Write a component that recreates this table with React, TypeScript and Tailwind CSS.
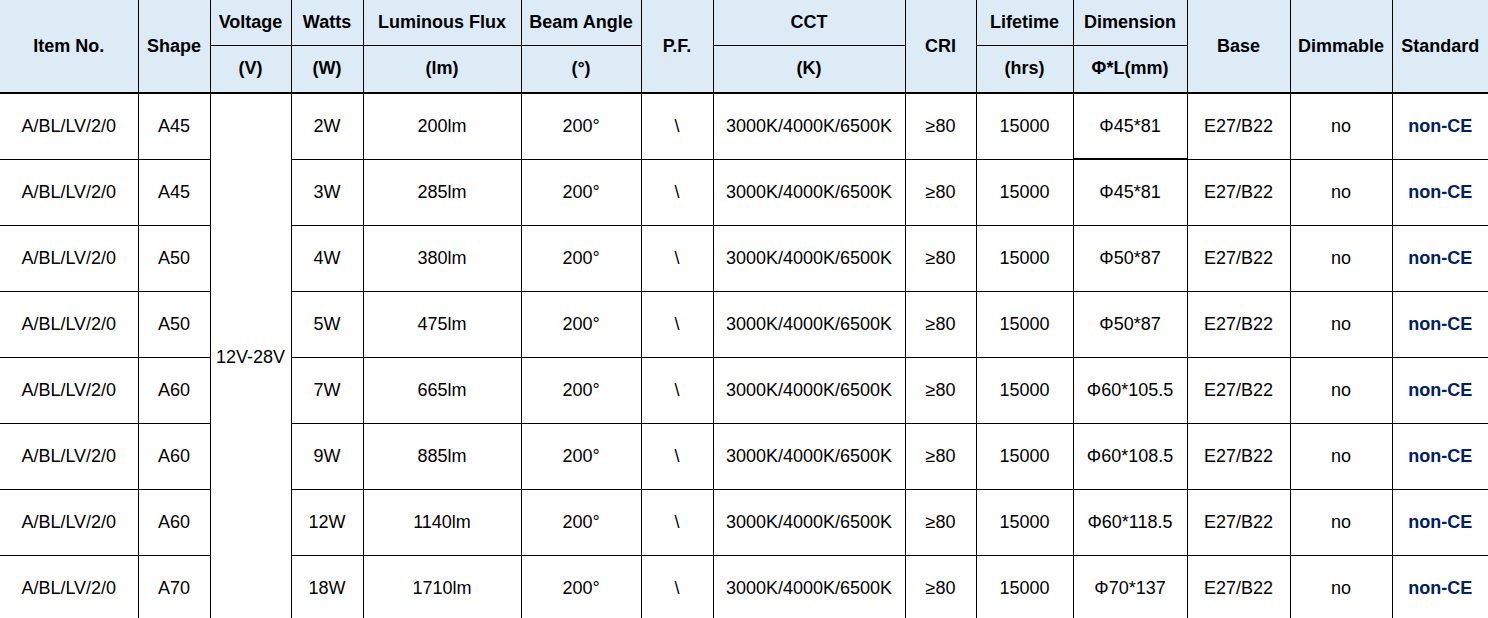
const rows = [
  { shape: "A45", watts: "2W", flux: "200lm", dim: "Φ45*81" },
  { shape: "A45", watts: "3W", flux: "285lm", dim: "Φ45*81" },
  { shape: "A50", watts: "4W", flux: "380lm", dim: "Φ50*87" },
  { shape: "A50", watts: "5W", flux: "475lm", dim: "Φ50*87" },
  { shape: "A60", watts: "7W", flux: "665lm", dim: "Φ60*105.5" },
  { shape: "A60", watts: "9W", flux: "885lm", dim: "Φ60*108.5" },
  { shape: "A60", watts: "12W", flux: "1140lm", dim: "Φ60*118.5" },
  { shape: "A70", watts: "18W", flux: "1710lm", dim: "Φ70*137" },
];

const widths = [138, 72, 81, 72, 158, 120, 72, 192, 71, 97, 114, 103, 102, 96];

const cell = "border-r border-b border-black text-center align-middle p-0";
const head = "border-r border-black text-center align-middle p-0 font-bold";

export default function App() {
  return (
    <div className="w-[1488px] h-[618px] overflow-hidden bg-white">
      <table
        className="table-fixed border-collapse text-[18px] text-black"
        style={{ width: 1488, fontFamily: '"Liberation Sans", Arial, sans-serif' }}
      >
        <colgroup>
          {widths.map((w, i) => (
            <col key={i} style={{ width: w }} />
          ))}
        </colgroup>
        <thead className="bg-[#ddebf7]">
          <tr className="h-[45px]">
            <th rowSpan={2} className={`${head} border-b-2`}>Item No.</th>
            <th rowSpan={2} className={`${head} border-b-2`}>Shape</th>
            <th className={`${head} border-b`}>Voltage</th>
            <th className={`${head} border-b`}>Watts</th>
            <th className={`${head} border-b`}>Luminous Flux</th>
            <th className={`${head} border-b`}>Beam Angle</th>
            <th rowSpan={2} className={`${head} border-b-2`}>P.F.</th>
            <th className={`${head} border-b`}>CCT</th>
            <th rowSpan={2} className={`${head} border-b-2`}>CRI</th>
            <th className={`${head} border-b`}>Lifetime</th>
            <th className={`${head} border-b`}>Dimension</th>
            <th rowSpan={2} className={`${head} border-b-2`}>Base</th>
            <th rowSpan={2} className={`${head} border-b-2`}>Dimmable</th>
            <th rowSpan={2} className="border-b-2 border-black text-center align-middle p-0 font-bold">
              Standard
            </th>
          </tr>
          <tr className="h-[48px]">
            <th className={`${head} border-b-2`}>(V)</th>
            <th className={`${head} border-b-2`}>(W)</th>
            <th className={`${head} border-b-2`}>(lm)</th>
            <th className={`${head} border-b-2`}>(°)</th>
            <th className={`${head} border-b-2`}>(K)</th>
            <th className={`${head} border-b-2`}>(hrs)</th>
            <th className={`${head} border-b-2`}>Φ*L(mm)</th>
          </tr>
        </thead>
        <tbody>
          {rows.map((r, i) => (
            <tr key={i} className="h-[66px]">
              <td className={cell}>A/BL/LV/2/0</td>
              <td className={cell}>{r.shape}</td>
              {i === 0 && (
                <td rowSpan={rows.length} className={cell}>
                  12V-28V
                </td>
              )}
              <td className={cell}>{r.watts}</td>
              <td className={cell}>{r.flux}</td>
              <td className={cell}>200°</td>
              <td className={cell}>\</td>
              <td className={cell}>3000K/4000K/6500K</td>
              <td className={cell}>≥80</td>
              <td className={cell}>15000</td>
              <td className={i === 0 ? `${cell} border-b-2` : cell}>{r.dim}</td>
              <td className={cell}>E27/B22</td>
              <td className={cell}>no</td>
              <td className="border-b border-black text-center align-middle p-0 font-bold text-[#002060]">
                non-CE
              </td>
            </tr>
          ))}
        </tbody>
      </table>
    </div>
  );
}
